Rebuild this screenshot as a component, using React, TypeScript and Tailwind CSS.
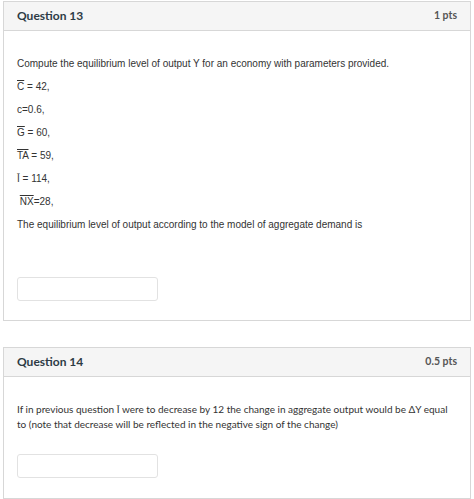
import React from "react";

const bodyFont = { fontFamily: '"Liberation Sans", Arial, sans-serif' };

const Bar: React.FC<{ children: React.ReactNode }> = ({ children }) => (
  <span className="[text-decoration-line:overline]">{children}</span>
);

const App: React.FC = () => {
  return (
    <div className="w-[474px] h-[499px] bg-white pt-[1px] font-['Lato',sans-serif] text-[#2d3b45] overflow-hidden">
      {/* Question 13 */}
      <div className="mx-[3px] border border-[#d7d7d7]">
        <div className="flex justify-between items-center h-[29px] px-[13px] bg-[#f5f5f5] border-b border-[#d7d7d7]">
          <h2 className="text-[12px] font-bold text-[#2d3b45]">Question 13</h2>
          <span className="text-[10.5px] font-bold text-[#555]">1 pts</span>
        </div>
        <div className="px-[13px] pt-[25px] pb-[19px] text-[10px] leading-[15px] text-[#333]" style={bodyFont}>
          <p className="mb-[8px]">Compute the equilibrium level of output Y for an economy with parameters provided.</p>
          <p className="mb-[8px]"><Bar>C</Bar> = 42,</p>
          <p className="mb-[8px]">c=0.6,</p>
          <p className="mb-[8px]"><Bar>G</Bar> = 60,</p>
          <p className="mb-[8px]"><Bar>TA</Bar> = 59,</p>
          <p className="mb-[8px]">Ī = 114,</p>
          <p className="mb-[8px]">&nbsp;<Bar>NX</Bar>=28,</p>
          <p>The equilibrium level of output according to the model of aggregate demand is</p>
          <div className="mt-[45px] w-[141px] h-[24px] border border-[#e2e2e2] rounded-[3px] bg-white" />
        </div>
      </div>

      {/* Question 14 */}
      <div className="mx-[3px] mt-[26px] border border-[#d7d7d7]">
        <div className="flex justify-between items-center h-[29px] px-[13px] bg-[#f5f5f5] border-b border-[#d7d7d7]">
          <h2 className="text-[12px] font-bold text-[#2d3b45]">Question 14</h2>
          <span className="text-[10.5px] font-bold text-[#555]">0.5 pts</span>
        </div>
        <div className="px-[13px] pt-[25px] pb-[20px] text-[10px] leading-[15px] text-[#333]">
          <p>
            If in previous question Ī were to decrease by 12 the change in aggregate output would be ΔY equal
            <br />
            to (note that decrease will be reflected in the negative sign of the change)
          </p>
          <div className="mt-[22px] w-[141px] h-[24px] border border-[#e2e2e2] rounded-[3px] bg-white" />
        </div>
      </div>
    </div>
  );
};

export default App;
